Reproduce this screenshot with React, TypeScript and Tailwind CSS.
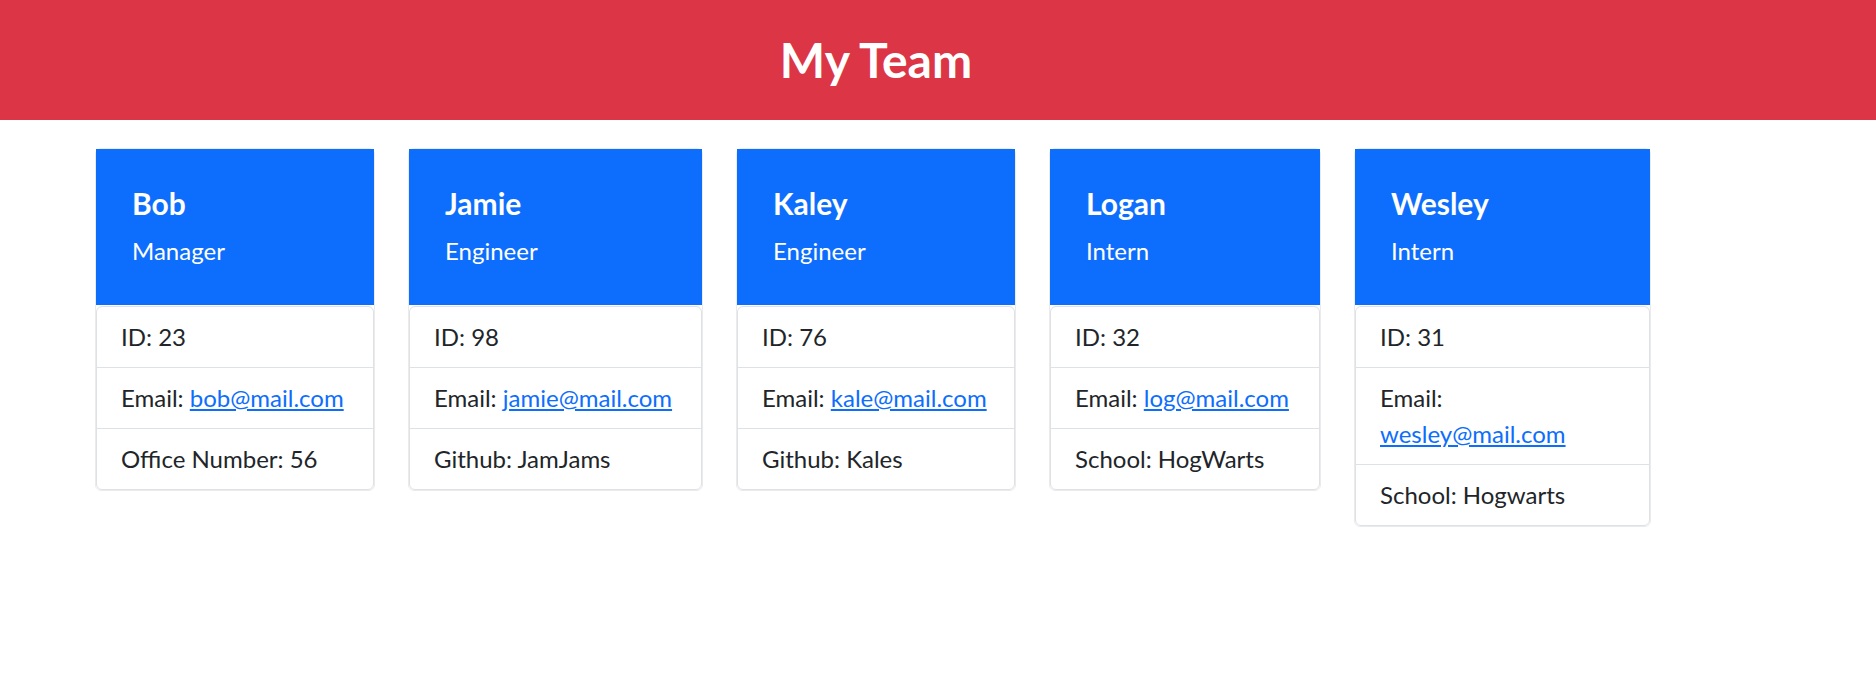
import React from 'react';

interface Member {
  name: string;
  role: string;
  id: number;
  email: string;
  extra: string;
  width: string;
  wrapEmail?: boolean;
}

const team: Member[] = [
  { name: 'Bob', role: 'Manager', id: 23, email: 'bob@mail.com', extra: 'Office Number: 56', width: 'w-[280px]' },
  { name: 'Jamie', role: 'Engineer', id: 98, email: 'jamie@mail.com', extra: 'Github: JamJams', width: 'w-[295px]' },
  { name: 'Kaley', role: 'Engineer', id: 76, email: 'kale@mail.com', extra: 'Github: Kales', width: 'w-[280px]' },
  { name: 'Logan', role: 'Intern', id: 32, email: 'log@mail.com', extra: 'School: HogWarts', width: 'w-[272px]' },
  { name: 'Wesley', role: 'Intern', id: 31, email: 'wesley@mail.com', extra: 'School: Hogwarts', width: 'w-[297px]', wrapEmail: true },
];

const EmployeeCard: React.FC<{ member: Member }> = ({ member }) => {
  return (
    <div className={`${member.width} shrink-0 rounded-md border border-black/[.08]`}>
      <div className="bg-[#0d6efd] px-[36px] pt-[36px] pb-[36px] text-white">
        <h2 className="text-[30px] leading-[36px] font-bold">{member.name}</h2>
        <p className="mt-3 text-[24px] leading-[36px]">{member.role}</p>
      </div>
      <ul className="mt-px rounded-md border border-[#dee2e6] text-[24px] leading-[36px] text-[#212529]">
        <li className="px-6 py-3">ID: {member.id}</li>
        <li className="border-t border-[#dee2e6] px-6 py-3">
          Email:{' '}
          <a href={`mailto:${member.email}`} className={`text-[#0d6efd] underline ${member.wrapEmail ? 'block' : ''}`}>
            {member.email}
          </a>
        </li>
        <li className="border-t border-[#dee2e6] px-6 py-3">{member.extra}</li>
      </ul>
    </div>
  );
};

export default function App() {
  return (
    <div className="min-h-screen bg-white font-['Lato',sans-serif]">
      <header className="flex h-[120px] items-center justify-center bg-[#dc3545] pr-[124px]">
        <h1 className="text-[48px] leading-[58px] font-bold text-white">My Team</h1>
      </header>
      <main className="mt-[28px] flex items-start gap-[33px] pl-[95px]">
        {team.map((m) => (
          <EmployeeCard key={m.name} member={m} />
        ))}
      </main>
    </div>
  );
}
